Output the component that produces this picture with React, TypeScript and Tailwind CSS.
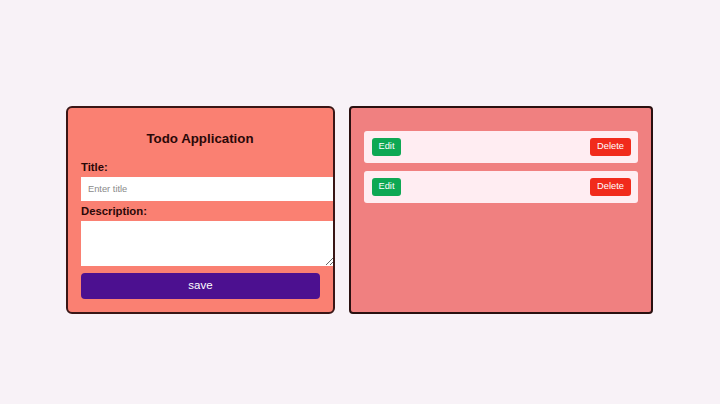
export default function App() {
  const items = [1, 2];
  return (
    <div
      className="w-[720px] h-[404px] bg-[#f8f2f7] flex justify-start items-start pl-[66px] pt-[106px] gap-[14px]"
      style={{ fontFamily: '"Liberation Sans", Arial, sans-serif' }}
    >
      <div className="w-[269px] h-[208px] bg-[#fa8072] border-2 border-[#3a1616] rounded-[6px] overflow-hidden pl-[13px] pt-[22px] flex flex-col shrink-0">
        <h2 className="text-[13.3px] font-bold text-[#2a0808] leading-[18px] text-center w-[238px]">Todo Application</h2>
        <label className="mt-[12px] text-[11.3px] font-bold text-[#2a0808] leading-[14px]">Title:</label>
        <input
          className="mt-[3px] w-[256px] h-[24px] bg-white px-[7px] text-[9.3px] placeholder:text-[#8a8a8a] outline-none shrink-0"
          placeholder="Enter title"
        />
        <label className="mt-[3px] text-[11.3px] font-bold text-[#2a0808] leading-[14px]">Description:</label>
        <textarea className="mt-[3px] w-[253px] h-[45px] bg-white outline-none shrink-0 block" />
        <button className="mt-[7px] w-[239px] h-[26px] bg-[#4c1090] rounded-[4px] text-white text-[11.5px] font-medium">
          save
        </button>
      </div>
      <div className="w-[304px] h-[208px] bg-[#f08080] border-2 border-[#2a1010] rounded-[4px] px-[13px] pt-[23px] flex flex-col gap-[8px] shrink-0">
        {items.map((i) => (
          <div key={i} className="h-[32px] bg-[#ffedf2] rounded-[3px] flex items-center justify-between pl-[8px] pr-[7px]">
            <button className="w-[29px] h-[18px] bg-[#0ea854] rounded-[3px] text-white text-[9.3px] leading-none">Edit</button>
            <button className="w-[41px] h-[18px] bg-[#f12b1c] rounded-[3px] text-white text-[9.3px] leading-none">Delete</button>
          </div>
        ))}
      </div>
    </div>
  );
}
